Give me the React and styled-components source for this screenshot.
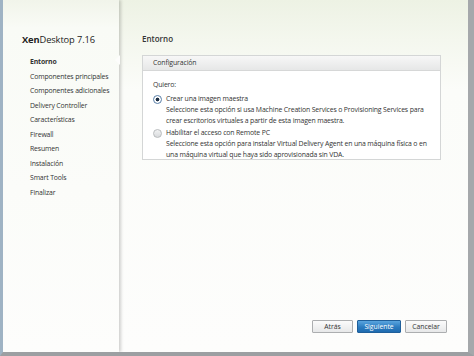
import React from 'react';
import styled, { createGlobalStyle } from 'styled-components';

const Global = createGlobalStyle`
  html, body {
    margin: 0;
    padding: 0;
    background: #a4a7aa;
  }
  body {
    font-family: "Open Sans", "DejaVu Sans", sans-serif;
  }
`;

const Window = styled.div`
  width: 474px;
  height: 356px;
  box-sizing: border-box;
  border-left: 3px solid #9fb3c4;
  border-right: 6px solid #a5a8ab;
  border-bottom: 4px solid #9c9fa2;
  display: flex;
  background: #fdfdfc;
  overflow: hidden;
`;

const Sidebar = styled.div`
  position: relative;
  width: 116px;
  flex-shrink: 0;
  box-sizing: border-box;
  padding: 33px 0 0 19px;
  background: linear-gradient(180deg, #f1f4ea 0px, #f9fbf6 28px, #fdfdfc 100%);
  box-shadow: 2px 0 3px rgba(0, 0, 0, 0.18);
  z-index: 1;
`;

const Brand = styled.div`
  font-size: 9.3px;
  color: #222;
  margin-bottom: 9px;
  letter-spacing: -0.1px;

  b {
    font-weight: 700;
  }
`;

const Nav = styled.ul`
  list-style: none;
  margin: 0;
  padding: 0 0 0 8px;
`;

const NavItem = styled.li`
  font-size: 6.9px;
  letter-spacing: -0.15px;
  line-height: 14.5px;
  color: #333;
  font-weight: ${(p) => (p.active ? 700 : 400)};
  white-space: nowrap;
`;

const Pointer = styled.div`
  position: absolute;
  right: -1px;
  top: 55px;
  width: 0;
  height: 0;
  border-top: 5px solid transparent;
  border-bottom: 5px solid transparent;
  border-right: 5px solid #fdfdfc;
  z-index: 2;
`;

const Main = styled.div`
  flex: 1;
  min-width: 0;
  display: flex;
  flex-direction: column;
  padding: 33px 27px 19px 23px;
  background: linear-gradient(180deg, #edf2e4 0px, #f4f7ee 40px, #fbfcf9 90px, #fdfdfc 100%);
`;

const Title = styled.div`
  font-size: 8px;
  font-weight: 600;
  color: #333;
  margin-bottom: 11px;
`;

const Panel = styled.div`
  border: 1px solid #d4d6d6;
  background: #ffffff;
  height: 105px;
  box-sizing: border-box;
`;

const PanelHeader = styled.div`
  height: 14px;
  line-height: 14px;
  padding-left: 10px;
  font-size: 6.9px;
  letter-spacing: -0.1px;
  color: #333;
  background: linear-gradient(180deg, #f7f7f7, #e6e7e7);
  border-bottom: 1px solid #d6d7d7;
`;

const PanelBody = styled.div`
  padding: 8px 10px 0 10px;
  font-size: 6.9px;
  letter-spacing: -0.15px;
  color: #333;
`;

const Label = styled.div`
  line-height: 11px;
  margin-bottom: 3px;
`;

const Option = styled.div`
  display: flex;
  gap: 4px;
`;

const Radio = styled.span`
  width: 7px;
  height: 7px;
  margin-top: 2px;
  flex-shrink: 0;
  border-radius: 50%;
  border: 1px solid ${(p) => (p.checked ? '#5a7fa8' : '#b9bcbe')};
  background: ${(p) =>
    p.checked
      ? 'radial-gradient(circle, #1d2f45 0 1.6px, #ffffff 2.2px)'
      : 'linear-gradient(180deg, #f1f2f3, #d8dadc)'};
`;

const OptionText = styled.div`
  line-height: 11.2px;
`;

const Desc = styled.div`
  white-space: nowrap;
`;

const Spacer = styled.div`
  flex: 1;
`;

const Buttons = styled.div`
  display: flex;
  justify-content: flex-end;
  gap: 4px;
  margin-right: -6px;
`;

const Button = styled.button`
  height: 13px;
  width: ${(p) => p.w}px;
  padding: 0;
  font-family: inherit;
  font-size: 6.8px;
  line-height: 11px;
  border-radius: 1px;
  border: 1px solid ${(p) => (p.primary ? '#1f5f9a' : '#acaeb0')};
  color: ${(p) => (p.primary ? '#ffffff' : '#333')};
  background: ${(p) =>
    p.primary
      ? 'linear-gradient(180deg, #5aa5df, #2c7cc0 55%, #1f6bb0)'
      : 'linear-gradient(180deg, #fbfbfb, #e7e8e9)'};
`;

const steps = [
  'Entorno',
  'Componentes principales',
  'Componentes adicionales',
  'Delivery Controller',
  'Características',
  'Firewall',
  'Resumen',
  'Instalación',
  'Smart Tools',
  'Finalizar',
];

export default function App() {
  return (
    <>
      <Global />
      <Window>
        <Sidebar>
          <Brand>
            <b>Xen</b>Desktop 7.16
          </Brand>
          <Nav>
            {steps.map((s, i) => (
              <NavItem key={s} active={i === 0}>
                {s}
              </NavItem>
            ))}
          </Nav>
          <Pointer />
        </Sidebar>
        <Main>
          <Title>Entorno</Title>
          <Panel>
            <PanelHeader>Configuración</PanelHeader>
            <PanelBody>
              <Label>Quiero:</Label>
              <Option>
                <Radio checked />
                <OptionText>
                  <div>Crear una imagen maestra</div>
                  <Desc>
                    Seleccione esta opción si usa Machine Creation Services o Provisioning Services para
                  </Desc>
                  <Desc>crear escritorios virtuales a partir de esta imagen maestra.</Desc>
                </OptionText>
              </Option>
              <Option>
                <Radio />
                <OptionText>
                  <div>Habilitar el acceso con Remote PC</div>
                  <Desc>
                    Seleccione esta opción para instalar Virtual Delivery Agent en una máquina física o en
                  </Desc>
                  <Desc>una máquina virtual que haya sido aprovisionada sin VDA.</Desc>
                </OptionText>
              </Option>
            </PanelBody>
          </Panel>
          <Spacer />
          <Buttons>
            <Button w={41}>Atrás</Button>
            <Button w={44} primary>
              Siguiente
            </Button>
            <Button w={42}>Cancelar</Button>
          </Buttons>
        </Main>
      </Window>
    </>
  );
}
